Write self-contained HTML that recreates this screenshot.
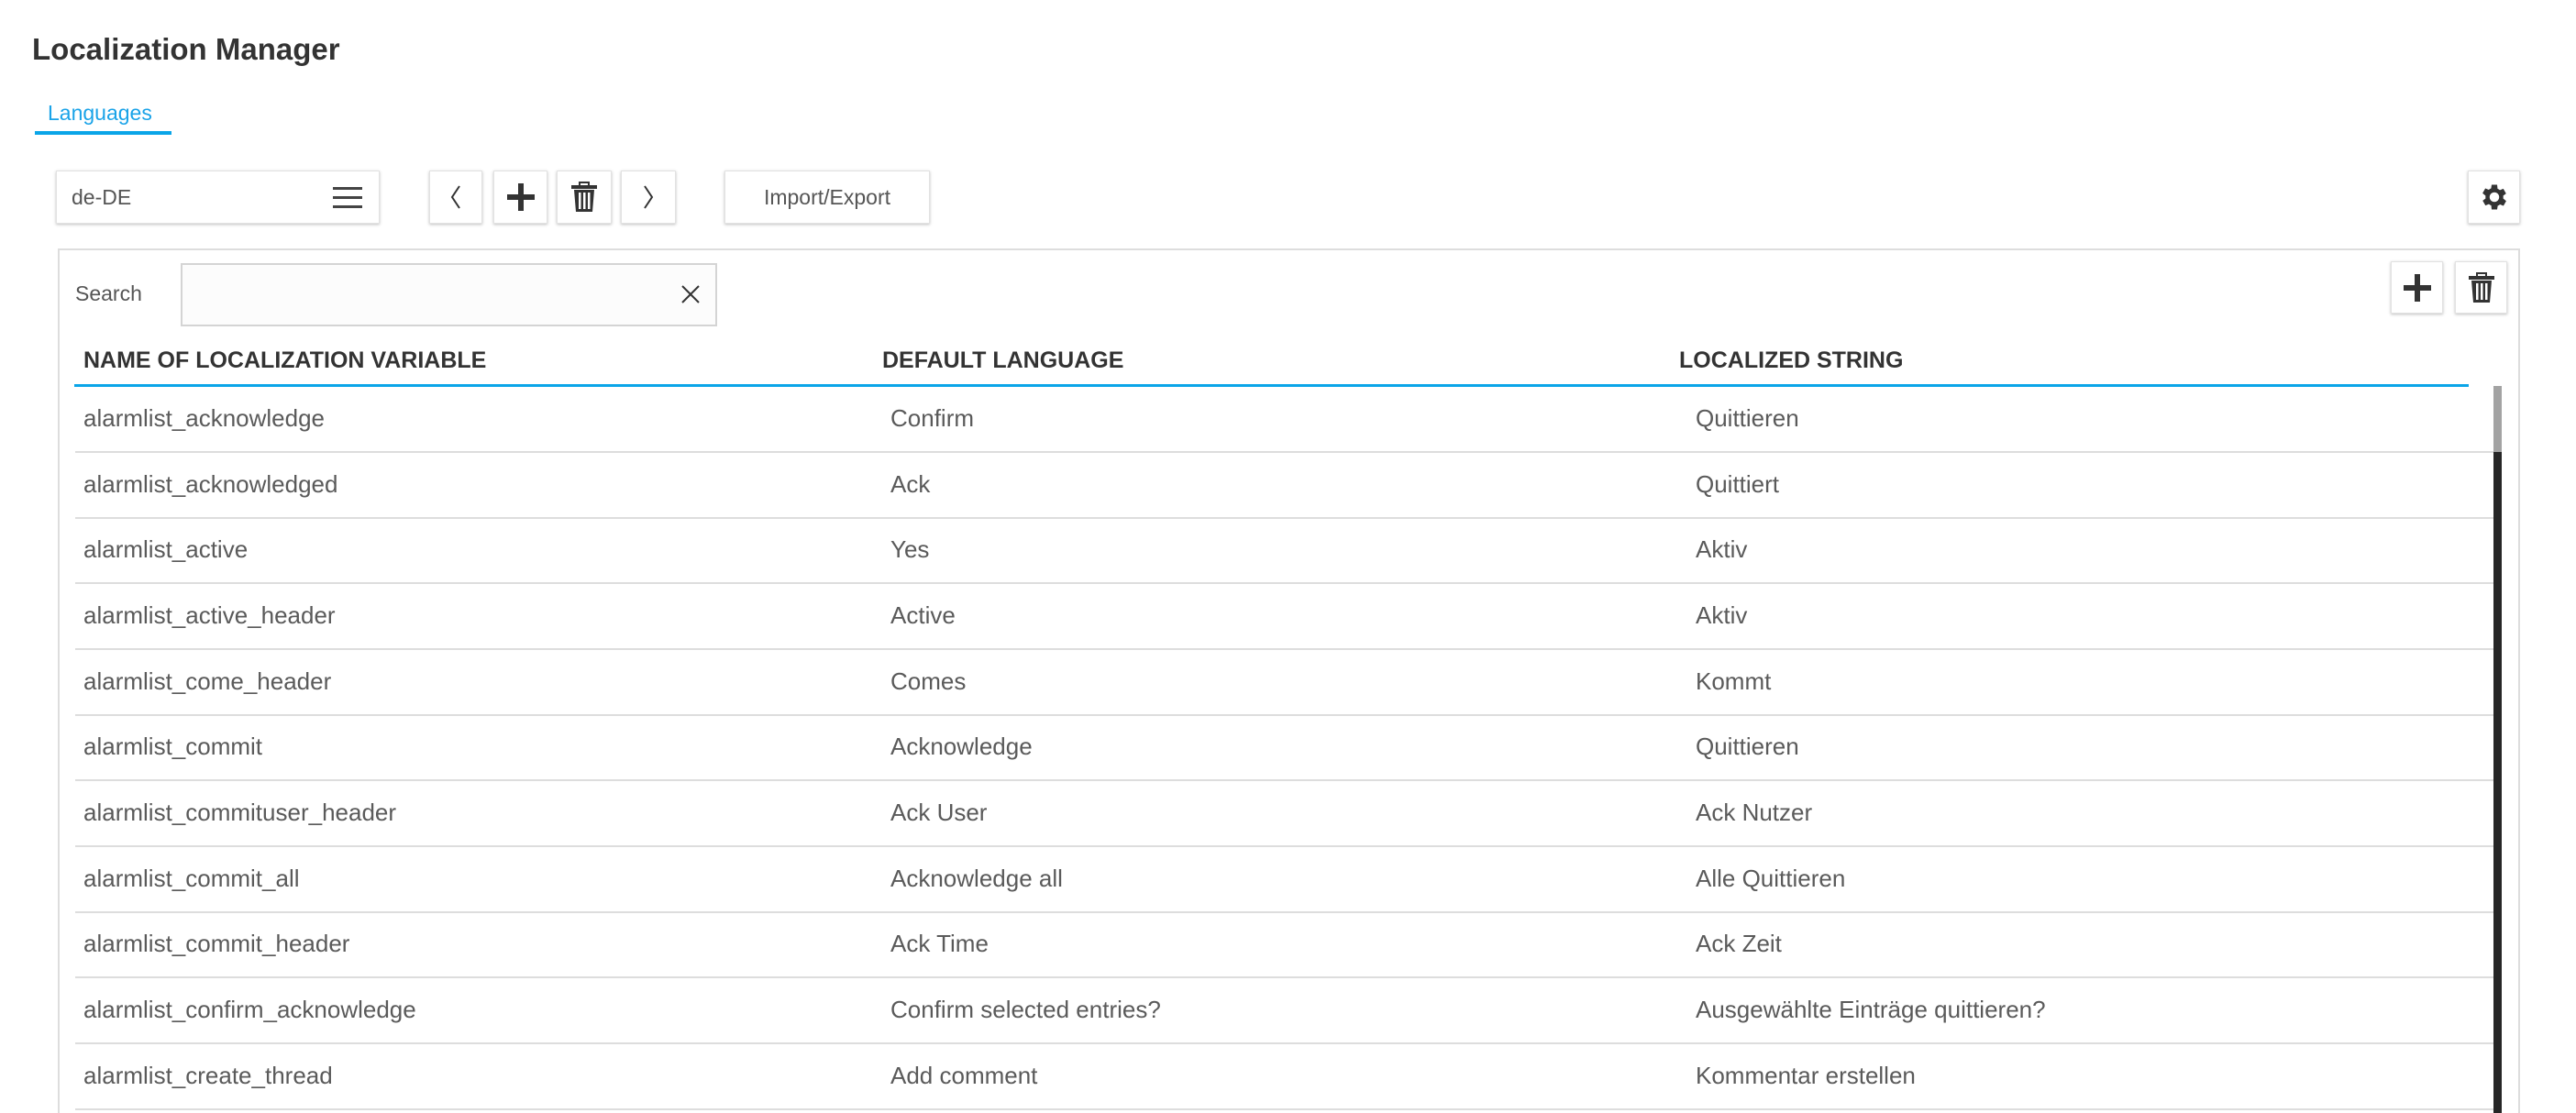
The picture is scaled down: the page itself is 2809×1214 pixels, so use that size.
<!DOCTYPE html>
<html><head><meta charset="utf-8">
<style>
*{box-sizing:border-box;margin:0;padding:0}
html,body{width:2809px;height:1214px;overflow:hidden}
body{background:#fff;font-family:"Liberation Sans",sans-serif;color:#444;position:relative}
.a{position:absolute}
.btn{position:absolute;top:186px;height:58px;background:#fff;border:1px solid #e2e2e2;box-shadow:0 1px 3px rgba(0,0,0,.25);display:flex;align-items:center;justify-content:center}
.row{position:absolute;left:82px;width:2637px;height:72px;border-bottom:2px solid #ddd;font-size:26px;color:#5a5a5a}
.row span{position:absolute;top:19px}
.hd{position:absolute;top:379px;font-size:25px;font-weight:bold;color:#333}
</style></head><body>
<div class="a" style="left:35px;top:35px;font-size:33px;font-weight:bold;color:#333">Localization Manager</div>
<div class="a" style="left:52px;top:110px;font-size:23px;color:#1aa3e8">Languages</div>
<div class="a" style="left:38px;top:143px;width:149px;height:4px;background:#0aa5e8"></div>

<div class="btn" style="left:61px;width:353px;justify-content:space-between;padding:0 18px 0 16px;font-size:23px;color:#555">de-DE
<svg width="32" height="26" viewBox="0 0 32 26"><rect y="2" width="32" height="3" fill="#444"/><rect y="12" width="32" height="3" fill="#444"/><rect y="22" width="32" height="3" fill="#444"/></svg></div>
<div class="btn" style="left:468px;width:58px"><svg width="20" height="32" viewBox="0 0 20 32"><path d="M14 4 L6 16 L14 28" stroke="#333" stroke-width="2" fill="none"/></svg></div>
<div class="btn" style="left:538px;width:59px"><svg width="32" height="32" viewBox="0 0 32 32"><rect x="13" y="1" width="6" height="30" fill="#333"/><rect x="1" y="13" width="30" height="6" fill="#333"/></svg></div>
<div class="btn" style="left:607px;width:60px"><svg width="30" height="34" viewBox="0 0 30 34"><path d="M10 4V1h10v3" stroke="#333" stroke-width="2" fill="none"/><rect x="1" y="4" width="28" height="4" fill="#333"/><path d="M4 9h22l-2 24H6z" fill="#333"/><rect x="9" y="12" width="2.5" height="18" fill="#fff"/><rect x="14" y="12" width="2.5" height="18" fill="#fff"/><rect x="19" y="12" width="2.5" height="18" fill="#fff"/></svg></div>
<div class="btn" style="left:677px;width:60px"><svg width="20" height="32" viewBox="0 0 20 32"><path d="M6 4 L14 16 L6 28" stroke="#333" stroke-width="2" fill="none"/></svg></div>
<div class="btn" style="left:790px;width:224px;font-size:23px;color:#555">Import/Export</div>
<div class="btn" style="left:2691px;width:57px"><svg width="36" height="36" viewBox="0 0 24 24"><path fill="#333" d="M19.4 13a7.5 7.5 0 000-2l2.1-1.6-2-3.5-2.5 1a7 7 0 00-1.7-1L15 3h-4l-.4 2.7a7 7 0 00-1.7 1l-2.5-1-2 3.5L6.6 11a7.5 7.5 0 000 2l-2.1 1.6 2 3.5 2.5-1a7 7 0 001.7 1L11 21h4l.4-2.7a7 7 0 001.7-1l2.5 1 2-3.5zM13 15.5a3.5 3.5 0 110-7 3.5 3.5 0 010 7z" transform="translate(-1 0)"/></svg></div>

<div class="a" style="left:63px;top:271px;width:2685px;height:960px;border:2px solid #ddd;border-bottom:none"></div>
<div class="a" style="left:82px;top:307px;font-size:23px;color:#555">Search</div>
<div class="a" style="left:197px;top:287px;width:585px;height:69px;border:2px solid #d4d4d4;background:#fcfcfc"></div>
<svg class="a" style="left:742px;top:310px" width="22" height="22" viewBox="0 0 22 22"><path d="M2 2L20 20M20 2L2 20" stroke="#333" stroke-width="2"/></svg>
<div class="btn" style="left:2607px;top:285px;width:57px;height:57px"><svg width="32" height="32" viewBox="0 0 32 32"><rect x="13" y="1" width="6" height="30" fill="#333"/><rect x="1" y="13" width="30" height="6" fill="#333"/></svg></div>
<div class="btn" style="left:2677px;top:285px;width:57px;height:57px"><svg width="30" height="34" viewBox="0 0 30 34"><path d="M10 4V1h10v3" stroke="#333" stroke-width="2" fill="none"/><rect x="1" y="4" width="28" height="4" fill="#333"/><path d="M4 9h22l-2 24H6z" fill="#333"/><rect x="9" y="12" width="2.5" height="18" fill="#fff"/><rect x="14" y="12" width="2.5" height="18" fill="#fff"/><rect x="19" y="12" width="2.5" height="18" fill="#fff"/></svg></div>

<div class="hd" style="left:91px">NAME OF LOCALIZATION VARIABLE</div>
<div class="hd" style="left:962px">DEFAULT LANGUAGE</div>
<div class="hd" style="left:1831px">LOCALIZED STRING</div>
<div class="a" style="left:81px;top:419px;width:2611px;height:3px;background:#0aa5e8"></div>
<div class="a" style="left:2719px;top:421px;width:9px;height:72px;background:#a3a3a3"></div>
<div class="a" style="left:2719px;top:493px;width:9px;height:760px;background:#262626"></div>

<div class="row" style="top:422px"><span style="left:9px">alarmlist_acknowledge</span><span style="left:889px">Confirm</span><span style="left:1767px">Quittieren</span></div>
<div class="row" style="top:494px"><span style="left:9px">alarmlist_acknowledged</span><span style="left:889px">Ack</span><span style="left:1767px">Quittiert</span></div>
<div class="row" style="top:565px"><span style="left:9px">alarmlist_active</span><span style="left:889px">Yes</span><span style="left:1767px">Aktiv</span></div>
<div class="row" style="top:637px"><span style="left:9px">alarmlist_active_header</span><span style="left:889px">Active</span><span style="left:1767px">Aktiv</span></div>
<div class="row" style="top:709px"><span style="left:9px">alarmlist_come_header</span><span style="left:889px">Comes</span><span style="left:1767px">Kommt</span></div>
<div class="row" style="top:780px"><span style="left:9px">alarmlist_commit</span><span style="left:889px">Acknowledge</span><span style="left:1767px">Quittieren</span></div>
<div class="row" style="top:852px"><span style="left:9px">alarmlist_commituser_header</span><span style="left:889px">Ack User</span><span style="left:1767px">Ack Nutzer</span></div>
<div class="row" style="top:924px"><span style="left:9px">alarmlist_commit_all</span><span style="left:889px">Acknowledge all</span><span style="left:1767px">Alle Quittieren</span></div>
<div class="row" style="top:995px"><span style="left:9px">alarmlist_commit_header</span><span style="left:889px">Ack Time</span><span style="left:1767px">Ack Zeit</span></div>
<div class="row" style="top:1067px"><span style="left:9px">alarmlist_confirm_acknowledge</span><span style="left:889px">Confirm selected entries?</span><span style="left:1767px">Ausgewählte Einträge quittieren?</span></div>
<div class="row" style="top:1139px"><span style="left:9px">alarmlist_create_thread</span><span style="left:889px">Add comment</span><span style="left:1767px">Kommentar erstellen</span></div>
</body></html>
